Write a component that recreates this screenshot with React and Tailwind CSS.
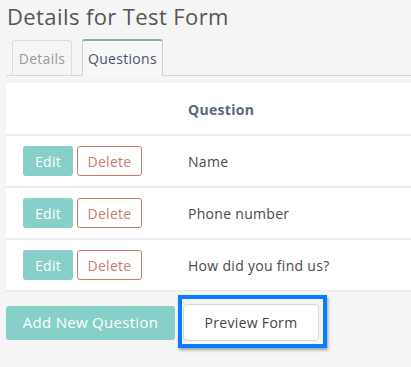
export default function App() {
  const questions = ["Name", "Phone number", "How did you find us?"];

  return (
    <div className="min-h-[367px] bg-[#f5f5f5] font-['Open_Sans',sans-serif] tracking-[0.3px] text-[#4a4a4a]">
      <div className="pl-[6px]">
        {/* Title */}
        <h1 className="pl-[1px] pt-[2px] text-[22px] leading-[28px] tracking-[0.4px] text-[#555]">Details for Test Form</h1>

        {/* Tabs */}
        <div className="mt-[9px] flex items-end border-b border-[#d6d6d6] pl-[6px]">
          <div className="flex h-[35px] w-[60px] items-center justify-center rounded-t-[3px] border border-b-0 border-[#dcdcdc] text-[14px] text-[#9a9a9a]">
            Details
          </div>
          <div className="relative -mb-px ml-[10px] flex h-[37px] w-[81px] items-center justify-center rounded-t-[3px] border border-b-0 border-[#cfcfcf] border-t-2 border-t-[#7fb0ac] bg-[#f7f7f7] text-[14px] text-[#4a5568]">
            Questions
          </div>
        </div>

        {/* Table */}
        <div className="mt-[7px] bg-white">
          <div className="flex h-[53px] items-center border-b-2 border-[#e9edf0] pt-[2px]">
            <div className="w-[182px]"></div>
            <div className="text-[14px] font-bold text-[#5a6680]">Question</div>
          </div>
          {questions.map((q) => (
            <div key={q} className="flex h-[52px] items-center border-b-2 border-[#e9edf0]">
              <div className="flex w-[182px] gap-[4px] pl-[17px]">
                <button className="h-[30px] w-[50px] rounded-[3px] bg-[#86d0c9] text-[14px] text-white">Edit</button>
                <button className="h-[30px] w-[65px] rounded-[3px] border border-[#c97b6e] bg-white text-[14px] text-[#c97b6e]">
                  Delete
                </button>
              </div>
              <div className="text-[14px] text-[#4a4a4a]">{q}</div>
            </div>
          ))}
        </div>

        {/* Actions */}
        <div className="mt-[12px] flex items-center gap-[8px]">
          <button className="h-[34px] w-[169px] rounded-[3px] bg-[#86d0c9] text-[15px] text-white">Add New Question</button>
          <div className="relative">
            <button className="h-[37px] w-[136px] rounded-[4px] border border-[#d6d6d6] bg-white text-[14px] text-[#444]">
              Preview Form
            </button>
            <div className="pointer-events-none absolute -left-[5px] -right-[8px] -top-[9px] -bottom-[7px] border-[4px] border-[#0a7cff] shadow-[1px_2px_3px_rgba(0,0,0,0.35)]"></div>
          </div>
        </div>
      </div>
    </div>
  );
}
